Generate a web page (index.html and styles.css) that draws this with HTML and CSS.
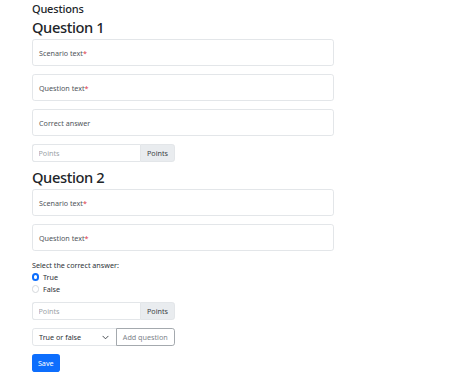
FILE: index.html
```html
<!DOCTYPE html>
<html lang="en">
<head>
<meta charset="utf-8">
<title>Questions</title>
<link rel="stylesheet" href="styles.css">
</head>
<body>
<main class="page">
  <h4 class="title">Questions</h4>

  <section class="question">
    <h2 class="q-title">Question 1</h2>
    <div class="field"><label>Scenario text<span class="req">*</span></label></div>
    <div class="field"><label>Question text<span class="req">*</span></label></div>
    <div class="field"><label>Correct answer</label></div>
    <div class="input-group points first-points">
      <input class="input" type="text" placeholder="Points">
      <span class="addon">Points</span>
    </div>
  </section>

  <section class="question">
    <h2 class="q-title q2">Question 2</h2>
    <div class="field"><label>Scenario text<span class="req">*</span></label></div>
    <div class="field"><label>Question text<span class="req">*</span></label></div>
    <div class="choice">
      <div class="choice-label">Select the correct answer:</div>
      <div class="check"><span class="radio checked"></span><span class="check-label">True</span></div>
      <div class="check"><span class="radio"></span><span class="check-label">False</span></div>
    </div>
    <div class="input-group points second-points">
      <input class="input" type="text" placeholder="Points">
      <span class="addon">Points</span>
    </div>
  </section>

  <div class="input-group add-row">
    <div class="select">
      <span>True or false</span>
      <svg class="chevron" viewBox="0 0 16 16" width="7" height="7"><path d="M2 5l6 6 6-6" fill="none" stroke="#343a40" stroke-width="2" stroke-linecap="round" stroke-linejoin="round"/></svg>
    </div>
    <button class="btn-outline" type="button">Add question</button>
  </div>

  <button class="btn-primary" type="button">Save</button>
</main>
</body>
</html>
```

FILE: styles.css
```css
html, body {
  margin: 0;
  background: #ffffff;
}

body {
  font-family: "Noto Sans", "Open Sans", "Liberation Sans", sans-serif;
  color: #212529;
}

.page {
  padding: 2px 0 0 32px;
  width: 302px;
}

.title {
  font-size: 11px;
  font-weight: 500;
  line-height: 13.2px;
  margin: 0 0 3.3px;
  letter-spacing: -0.2px;
}

.q-title {
  font-size: 14.7px;
  font-weight: 500;
  line-height: 17.6px;
  margin: 0 0 3px;
  letter-spacing: -0.4px;
}

.q2 {
  margin-top: 7px;
}

.field {
  box-sizing: border-box;
  height: 27px;
  margin-bottom: 8px;
  padding-left: 6px;
  border: 1px solid #e3e6e9;
  border-radius: 2.8px;
  display: flex;
  align-items: center;
  font-size: 7.2px;
  color: #50555a;
}

.req {
  color: #dc3545;
}

.input-group {
  display: flex;
  width: 142.5px;
  height: 18px;
  box-sizing: border-box;
}

.first-points {
  margin-top: 1px;
  height: 17.5px;
}

.second-points {
  margin-top: 7px;
}

.input {
  flex: 1;
  min-width: 0;
  box-sizing: border-box;
  height: 100%;
  margin: 0;
  padding: 0 0 0 5.5px;
  border: 1px solid #e3e6e9;
  border-right: none;
  border-radius: 2.8px 0 0 2.8px;
  font-family: inherit;
  font-size: 7.2px;
  color: #212529;
  background: #fff;
  outline: none;
}

.input::placeholder {
  color: #9ba1a6;
}

.addon {
  display: flex;
  align-items: center;
  box-sizing: border-box;
  padding: 0 5.5px;
  background: #e9ecef;
  border: 1px solid #e3e6e9;
  border-radius: 0 2.8px 2.8px 0;
  font-size: 7.2px;
  color: #3a3f44;
}

.choice {
  font-size: 7.2px;
  line-height: 12px;
  color: #2d3237;
}

.check {
  display: flex;
  align-items: center;
  height: 12px;
}

.radio {
  box-sizing: border-box;
  width: 7.4px;
  height: 7.4px;
  border-radius: 50%;
  border: 1px solid #d5d8db;
  background: #fff;
  margin-right: 3.6px;
}

.radio.checked {
  background: #fff;
  border: 2px solid #0d6efd;
}

.add-row {
  margin-top: 8px;
}

.select {
  box-sizing: border-box;
  width: 85px;
  height: 100%;
  display: flex;
  align-items: center;
  justify-content: space-between;
  padding: 0 6px 0 6px;
  border: 1px solid #e3e6e9;
  border-radius: 2.8px 0 0 2.8px;
  font-size: 7.2px;
  color: #2d3237;
}

.chevron {
  display: block;
  margin-right: 1px;
}

.btn-outline {
  flex: 1;
  box-sizing: border-box;
  height: 100%;
  margin: 0 0 0 -1px;
  padding: 0 4px;
  background: #fff;
  border: 1px solid #a4a9ae;
  border-radius: 0 2.8px 2.8px 0;
  font-family: inherit;
  font-size: 7.2px;
  color: #7d848a;
  white-space: nowrap;
}

.btn-primary {
  display: block;
  box-sizing: border-box;
  margin-top: 8px;
  width: 27.5px;
  height: 18px;
  padding: 0;
  background: #0d6efd;
  border: none;
  border-radius: 2.8px;
  font-family: inherit;
  font-size: 7.2px;
  color: #ffffff;
}
```
